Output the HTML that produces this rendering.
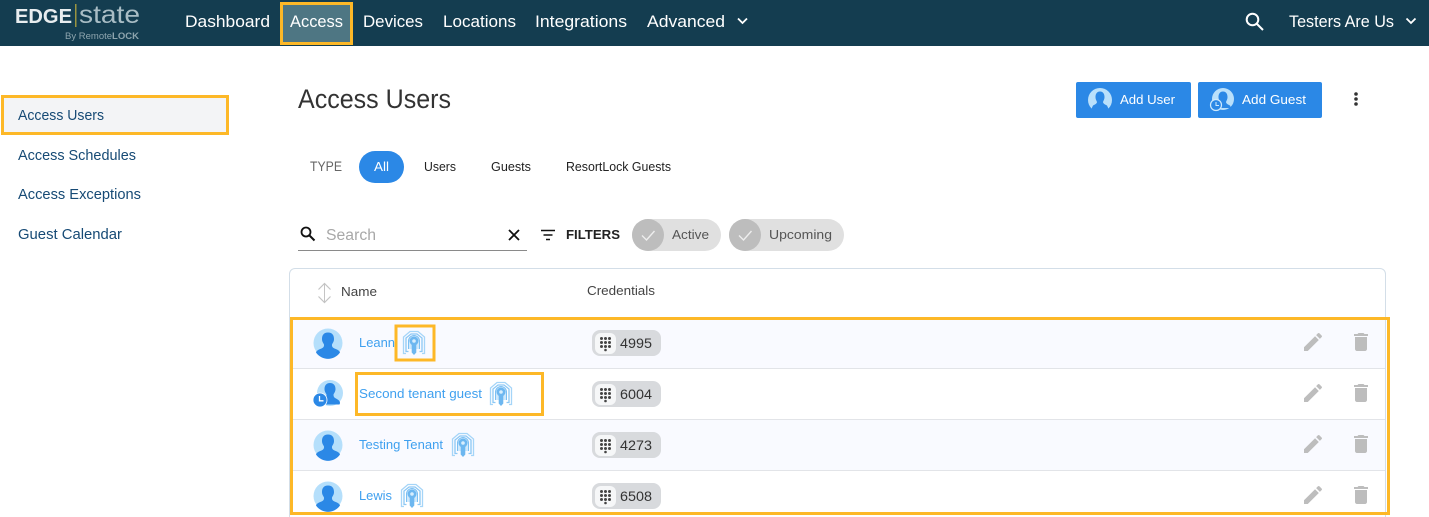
<!DOCTYPE html>
<html><head><meta charset="utf-8"><title>Access Users</title>
<style>
html,body{margin:0;padding:0;background:#fff;width:1429px;height:517px;overflow:hidden}
svg{display:block}
text{font-family:"Liberation Sans",sans-serif}
</style></head><body>
<svg width="1429" height="517" viewBox="0 0 1429 517" xmlns="http://www.w3.org/2000/svg">
<defs>
<g id="key" fill="none">
<path d="M-8 10.500H-10.500V-6L-4-11.500H4L10.500-6V10.500H8" stroke="#a5d5f8" stroke-width="1.300"/>
<path d="M-5.500 8.500H-8V-5L-3-9H3L8-5V8.500H5.500" stroke="#8cc8f5" stroke-width="1.300"/>
<path d="M-5.500 6V-2A5.500 5.500 0 0 1 5.500-2V6" fill="#cfe9fc" stroke="#7cc0f3" stroke-width="1"/>
<circle cx="0" cy="-2" r="4.500" fill="#6db7f0"/>
<path d="M-2.300 1H2.300V9.500L0 12L-2.300 9.500Z" fill="#6db7f0"/>
<circle cx="0" cy="-2" r="1.800" fill="#d8eefd"/>
</g>
<g id="avatar">
<circle r="14.500" fill="#b5dffb"/>
<path d="M0-10.500C-4.500-10.500-6-7.500-6-4C-6-1.500-5-0.500-4 1.500C-3.800 3.500-4.500 4.500-6.500 5.500C-9 6.500-11.500 7.500-12 9.500A14.500 14.500 0 0 0 12 9.500C11.500 7.500 9 6.500 6.500 5.500C4.500 4.500 3.800 3.500 4 1.500C5-0.500 6-1.500 6-4C6-7.500 4.500-10.500 0-10.500Z" fill="#2b88e6"/>
</g>
<g id="guest">
<circle cx="4" cy="-1" r="13" fill="#b5dffb"/>
<path d="M4-11C0-11-1.500-8-1.500-5C-1.500-2.500-0.500-1.500 0.500 0.500C0.500 2.500 0 3.500-2 4.500C-4 5.500-4 8-4 10.500H13.500C15 8 13 6 10 4.500C8 3.500 7.500 2.500 7.500 0.500C8.500-1.500 9.500-2.500 9.500-5C9.500-8 8-11 4-11Z" fill="#2b88e6"/>
<circle cx="-6" cy="6" r="7" fill="#2b88e6" stroke="#fff" stroke-width="0.800"/>
<path d="M-6.500 2V6.800H-2.500" fill="none" stroke="#fff" stroke-width="1.300"/>
</g>
<g id="chip">
<rect width="69" height="26" rx="8" fill="#d8dadd"/>
<rect x="3" y="3" width="21" height="21" rx="6" fill="#f6f7f8"/>
<g fill="#444"><circle cx="9.500" cy="8.500" r="1.500"/><circle cx="13.500" cy="8.500" r="1.500"/><circle cx="17.500" cy="8.500" r="1.500"/><circle cx="9.500" cy="12.500" r="1.500"/><circle cx="13.500" cy="12.500" r="1.500"/><circle cx="17.500" cy="12.500" r="1.500"/><circle cx="9.500" cy="16.500" r="1.500"/><circle cx="13.500" cy="16.500" r="1.500"/><circle cx="17.500" cy="16.500" r="1.500"/><circle cx="13.500" cy="20" r="1.300"/></g>
</g>
<g id="pencil"><path fill="#bdbdbd" d="M3 17.250V21h3.750L17.810 9.940l-3.750-3.750L3 17.250zM20.710 7.040a1 1 0 0 0 0-1.410l-2.340-2.340a1 1 0 0 0-1.410 0l-1.830 1.830 3.750 3.750 1.830-1.830z"/></g>
<g id="trash"><path fill="#bdbdbd" d="M6 19c0 1.100.9 2 2 2h8c1.100 0 2-.9 2-2V7H6v12zM19 4h-3.500l-1-1h-5l-1 1H5v2h14V4z"/></g>
</defs>

<!-- nav -->
<rect width="1429" height="46" fill="#143d50"/>
<rect x="281" y="3" width="71" height="41" fill="#4e7683"/>
<rect x="281.500" y="3.500" width="70" height="40" fill="none" stroke="#fdb827" stroke-width="3"/>
<text x="15" y="23" font-size="20" font-weight="700" fill="#e8edef" textLength="57" lengthAdjust="spacingAndGlyphs">EDGE</text>
<rect x="75" y="4" width="1.500" height="23" fill="#9a9440"/>
<text x="79" y="23" font-size="25" fill="#a9bdc5" textLength="61" lengthAdjust="spacingAndGlyphs">state</text>
<text x="65" y="39" font-size="9.500" fill="#8ea5ae" textLength="74" lengthAdjust="spacingAndGlyphs">By Remote<tspan font-weight="700">LOCK</tspan></text>
<g font-size="17" fill="#fff">
<text x="185" y="27" textLength="85" lengthAdjust="spacingAndGlyphs">Dashboard</text>
<text x="290" y="27" textLength="53" lengthAdjust="spacingAndGlyphs">Access</text>
<text x="363" y="27" textLength="60" lengthAdjust="spacingAndGlyphs">Devices</text>
<text x="443" y="27" textLength="73" lengthAdjust="spacingAndGlyphs">Locations</text>
<text x="535" y="27" textLength="92" lengthAdjust="spacingAndGlyphs">Integrations</text>
<text x="647" y="27" textLength="78" lengthAdjust="spacingAndGlyphs">Advanced</text>
<text x="1289" y="27" textLength="105" lengthAdjust="spacingAndGlyphs">Testers Are Us</text>
</g>
<path d="M738 18.500L742.500 23L747 18.500" fill="none" stroke="#fff" stroke-width="1.800"/>
<path d="M1406.500 18.500L1411 23L1415.500 18.500" fill="none" stroke="#fff" stroke-width="1.800"/>
<circle cx="1252.500" cy="19.500" r="5.800" fill="none" stroke="#fff" stroke-width="2"/>
<path d="M1257 24L1263 30" stroke="#fff" stroke-width="2"/>

<!-- sidebar -->
<rect x="2.500" y="96.500" width="225" height="37" fill="#f3f4f6" stroke="#fdb827" stroke-width="3"/>
<g font-size="15" fill="#164a75">
<text x="18" y="120" textLength="86" lengthAdjust="spacingAndGlyphs">Access Users</text>
<text x="18" y="160" textLength="118" lengthAdjust="spacingAndGlyphs">Access Schedules</text>
<text x="18" y="199" textLength="123" lengthAdjust="spacingAndGlyphs">Access Exceptions</text>
<text x="18" y="239" textLength="104" lengthAdjust="spacingAndGlyphs">Guest Calendar</text>
</g>

<!-- title and buttons -->
<text x="298" y="108" font-size="27" fill="#333" textLength="153" lengthAdjust="spacingAndGlyphs">Access Users</text>
<rect x="1076" y="82" width="115" height="36" rx="2" fill="#2b88e6"/>
<rect x="1198" y="82" width="124" height="36" rx="2" fill="#2b88e6"/>
<circle cx="1100" cy="100" r="12" fill="#b9e0fb"/>
<path d="M1100 91.500C1096.500 91.500 1095.500 94.500 1095.500 97C1095.500 99.500 1096.500 100.500 1097 102C1097 103.500 1095 104.500 1093 105.500L1091.500 108.800A12 12 0 0 0 1108.500 108.800L1107 105.500C1105 104.500 1103 103.500 1103 102C1103.500 100.500 1104.500 99.500 1104.500 97C1104.500 94.500 1103.500 91.500 1100 91.500Z" fill="#2b88e6"/>
<circle cx="1223" cy="99" r="11" fill="#b9e0fb"/>
<path d="M1223 91.500C1219.500 91.500 1218.500 94.500 1218.500 97C1218.500 99.500 1219.500 100.500 1220 102C1220 103.500 1218 104.500 1216 105.500L1216 108H1231L1230 105.500C1228 104.500 1226 103.500 1226 102C1226.500 100.500 1227.500 99.500 1227.500 97C1227.500 94.500 1226.500 91.500 1223 91.500Z" fill="#2b88e6"/>
<circle cx="1216" cy="105" r="5.500" fill="#2b88e6" stroke="#cfeafd" stroke-width="1.200"/>
<path d="M1216 102V105.500H1219" fill="none" stroke="#cfeafd" stroke-width="1"/>
<g font-size="13" fill="#fff">
<text x="1120" y="104" textLength="55" lengthAdjust="spacingAndGlyphs">Add User</text>
<text x="1242" y="104" textLength="64" lengthAdjust="spacingAndGlyphs">Add Guest</text>
</g>
<g fill="#333"><circle cx="1356" cy="94" r="1.800"/><circle cx="1356" cy="99" r="1.800"/><circle cx="1356" cy="104" r="1.800"/></g>

<!-- type -->
<text x="310" y="171" font-size="13.500" fill="#666" textLength="32" lengthAdjust="spacingAndGlyphs">TYPE</text>
<rect x="359" y="151" width="45" height="32" rx="16" fill="#2b88e6"/>
<text x="374" y="171" font-size="12.500" fill="#fff" textLength="15" lengthAdjust="spacingAndGlyphs">All</text>
<g font-size="12.500" fill="#222">
<text x="424" y="171" textLength="32" lengthAdjust="spacingAndGlyphs">Users</text>
<text x="491" y="171" textLength="40" lengthAdjust="spacingAndGlyphs">Guests</text>
<text x="566" y="171" textLength="105" lengthAdjust="spacingAndGlyphs">ResortLock Guests</text>
</g>

<!-- search / filters -->
<circle cx="306" cy="232" r="4.500" fill="none" stroke="#111" stroke-width="1.800"/>
<path d="M309.500 235.500L314.500 240.500" stroke="#111" stroke-width="2"/>
<text x="326" y="240" font-size="15.500" fill="#a8a8a8" textLength="50" lengthAdjust="spacingAndGlyphs">Search</text>
<path d="M509 230L519 240M519 230L509 240" stroke="#111" stroke-width="1.800"/>
<rect x="298" y="250" width="229" height="1" fill="#8a8a8a"/>
<path d="M541 230.500H555M543.500 235H552.500M546 239.500H550" stroke="#111" stroke-width="1.500"/>
<text x="566" y="239" font-size="13" font-weight="700" fill="#222" textLength="54" lengthAdjust="spacingAndGlyphs">FILTERS</text>
<rect x="632" y="219" width="89" height="32" rx="16" fill="#e0e0e0"/>
<circle cx="648" cy="235" r="16" fill="#bdbdbd"/>
<path d="M642 235.500L646.500 240L654.500 231" fill="none" stroke="#eee" stroke-width="1.400"/>
<text x="672" y="239" font-size="13" fill="#555" textLength="37" lengthAdjust="spacingAndGlyphs">Active</text>
<rect x="729" y="219" width="115" height="32" rx="16" fill="#e0e0e0"/>
<circle cx="745" cy="235" r="16" fill="#bdbdbd"/>
<path d="M739 235.500L743.500 240L751.500 231" fill="none" stroke="#eee" stroke-width="1.400"/>
<text x="769" y="239" font-size="13" fill="#555" textLength="63" lengthAdjust="spacingAndGlyphs">Upcoming</text>

<!-- table -->
<path d="M289.500 517V274a5.500 5.500 0 0 1 5.500-5.500H1380a5.500 5.500 0 0 1 5.500 5.500V517" fill="none" stroke="#d3dee8"/>
<path d="M324.500 284V302" stroke="#c4c4c4"/>
<path d="M318.500 289.500L324.500 283.500L330.500 289.500M318.500 296.500L324.500 302.500L330.500 296.500" fill="none" stroke="#c4c4c4" stroke-width="1.200"/>
<text x="341" y="296" font-size="13" fill="#444" textLength="36" lengthAdjust="spacingAndGlyphs">Name</text>
<text x="587" y="295" font-size="13" fill="#444" textLength="68" lengthAdjust="spacingAndGlyphs">Credentials</text>

<rect x="290" y="318" width="1095" height="50" fill="#f9faff"/>
<rect x="290" y="420" width="1095" height="50" fill="#f9faff"/>
<rect x="290" y="368" width="1095" height="1" fill="#e2e4e8"/>
<rect x="290" y="419" width="1095" height="1" fill="#e2e4e8"/>
<rect x="290" y="470" width="1095" height="1" fill="#e2e4e8"/>

<use href="#avatar" x="328" y="343"/>
<use href="#guest" x="326" y="394"/>
<use href="#avatar" x="328" y="445"/>
<use href="#avatar" x="328" y="496"/>

<g font-size="13" fill="#3fa0ef">
<text x="359" y="347" textLength="36" lengthAdjust="spacingAndGlyphs">Leann</text>
<text x="359" y="398" textLength="123" lengthAdjust="spacingAndGlyphs">Second tenant guest</text>
<text x="359" y="449" textLength="84" lengthAdjust="spacingAndGlyphs">Testing Tenant</text>
<text x="359" y="500" textLength="33" lengthAdjust="spacingAndGlyphs">Lewis</text>
</g>
<use href="#key" x="414" y="343"/>
<use href="#key" x="501" y="394"/>
<use href="#key" x="463" y="445"/>
<use href="#key" x="412" y="496"/>

<use href="#chip" x="592" y="330"/>
<use href="#chip" x="592" y="381"/>
<use href="#chip" x="592" y="432"/>
<use href="#chip" x="592" y="483"/>
<g font-size="14" fill="#333">
<text x="620" y="348" textLength="32" lengthAdjust="spacingAndGlyphs">4995</text>
<text x="620" y="399" textLength="32" lengthAdjust="spacingAndGlyphs">6004</text>
<text x="620" y="450" textLength="32" lengthAdjust="spacingAndGlyphs">4273</text>
<text x="620" y="501" textLength="32" lengthAdjust="spacingAndGlyphs">6508</text>
</g>

<use href="#pencil" x="1301" y="330"/><use href="#trash" x="1349" y="330"/>
<use href="#pencil" x="1301" y="381"/><use href="#trash" x="1349" y="381"/>
<use href="#pencil" x="1301" y="432"/><use href="#trash" x="1349" y="432"/>
<use href="#pencil" x="1301" y="483"/><use href="#trash" x="1349" y="483"/>

<!-- annotation boxes -->
<g fill="none" stroke="#fdb827" stroke-width="3">
<rect x="291.500" y="318.500" width="1097" height="195"/>
<rect x="396" y="326" width="38" height="34"/>
<rect x="356.500" y="373.500" width="186" height="41"/>
</g>
</svg>
</body></html>
